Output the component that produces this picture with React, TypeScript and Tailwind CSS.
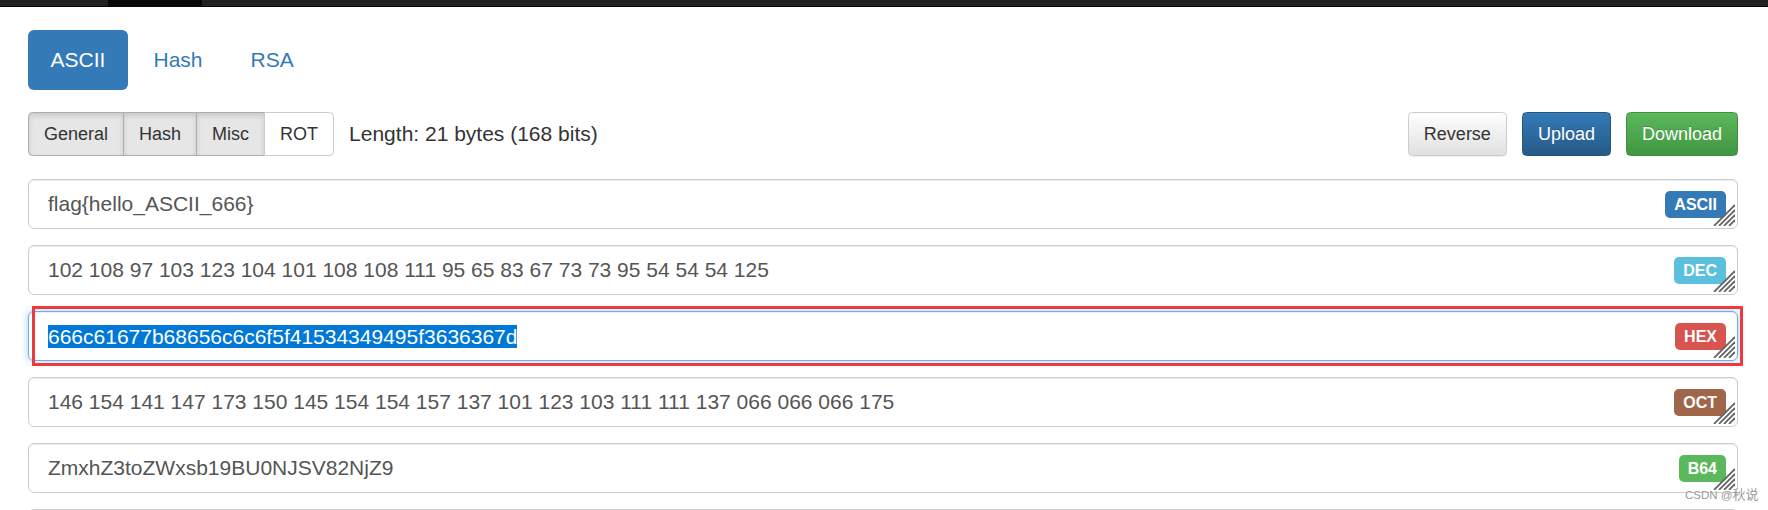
import React from 'react';

type Row = {
  value: string;
  label: string;
  badge: string;
  focused?: boolean;
};

const rows: Row[] = [
  { value: 'flag{hello_ASCII_666}', label: 'ASCII', badge: 'bg-[#337ab7]' },
  {
    value: '102 108 97 103 123 104 101 108 108 111 95 65 83 67 73 73 95 54 54 54 125',
    label: 'DEC',
    badge: 'bg-[#5bc0de]',
  },
  { value: '666c61677b68656c6c6f5f41534349495f3636367d', label: 'HEX', badge: 'bg-[#d9534f]', focused: true },
  {
    value: '146 154 141 147 173 150 145 154 154 157 137 101 123 103 111 111 137 066 066 066 175',
    label: 'OCT',
    badge: 'bg-[#a0664a]',
  },
  { value: 'ZmxhZ3toZWxsb19BU0NJSV82NjZ9', label: 'B64', badge: 'bg-[#5cb85c]' },
  { value: '', label: '', badge: '' },
];

function Grip() {
  // textarea resize handle
  return (
    <svg className="absolute right-[2px] bottom-[2px]" width="22" height="22" viewBox="0 0 22 22">
      {[6, 11, 16, 21].map((k) => (
        <line key={k} x1={22 - k} y1={22} x2={22} y2={22 - k} stroke="#666" strokeWidth="1.8" />
      ))}
    </svg>
  );
}

function ValueBox({ row }: { row: Row }) {
  return (
    <div className="relative">
      <div
        className={`relative h-[50px] rounded-[6px] border bg-white pl-[19px] pr-[80px] flex items-center text-[21px] text-[#555] whitespace-nowrap overflow-hidden ${
          row.focused
            ? 'border-[#66afe9] shadow-[inset_0_1px_1px_rgba(0,0,0,0.075),0_0_8px_rgba(102,175,233,0.6)]'
            : 'border-[#ccc] shadow-[inset_0_1px_1px_rgba(0,0,0,0.075)]'
        }`}
      >
        {row.focused ? (
          <span className="inline-block bg-[#0078d7] text-white leading-[23px]">{row.value}</span>
        ) : (
          <span>{row.value}</span>
        )}
        {row.label && (
          <span
            className={`absolute top-[11px] right-[11px] h-[27px] px-[9px] flex items-center rounded-[5px] text-white text-[16px] font-bold ${row.badge}`}
          >
            {row.label}
          </span>
        )}
        <Grip />
      </div>
      {row.focused && (
        <div className="absolute left-[4px] top-[-5px] right-[-5px] bottom-[-5px] border-[3px] border-[#ef3a3d] pointer-events-none" />
      )}
    </div>
  );
}

export default function App() {
  const groupBtns = [
    { name: 'General', active: true },
    { name: 'Hash', active: true },
    { name: 'Misc', active: true },
    { name: 'ROT', active: false },
  ];

  return (
    <div className="relative min-h-[510px] bg-white font-['Liberation_Sans',Arial,sans-serif] text-[#333]">
      <div className="h-[7px] bg-[#222] border-b border-[#080808] flex">
        <div className="w-[108px]" />
        <div className="w-[94px] bg-[#080808]" />
      </div>

      <div className="pl-[28px] pr-[30px]">
        <div className="mt-[23px] flex items-center text-[21px]">
          <div className="h-[60px] w-[100px] rounded-[6px] bg-[#337ab7] text-white flex items-center justify-center">
            ASCII
          </div>
          <div className="ml-[3px] h-[60px] px-[22.5px] flex items-center text-[#337ab7]">Hash</div>
          <div className="ml-[3px] h-[60px] px-[22.5px] flex items-center text-[#337ab7]">RSA</div>
        </div>

        <div className="mt-[22px] flex items-center">
          <div className="flex">
            {groupBtns.map((b, i) => (
              <div
                key={b.name}
                className={`h-[44px] px-[15px] flex items-center text-[18px] text-[#333] border ${
                  i > 0 ? '-ml-px' : ''
                } ${i === 0 ? 'rounded-l-[4.5px]' : ''} ${i === groupBtns.length - 1 ? 'rounded-r-[4.5px]' : ''} ${
                  b.active
                    ? 'bg-[#e6e6e6] border-[#adadad] shadow-[inset_0_3px_5px_rgba(0,0,0,0.125)]'
                    : 'bg-white border-[#ccc] z-10'
                }`}
              >
                {b.name}
              </div>
            ))}
          </div>
          <div className="ml-[15px] text-[21px] text-[#333]">Length: 21 bytes (168 bits)</div>

          <div className="ml-auto flex gap-[15px]">
            <button className="h-[44px] px-[15px] text-[18px] text-[#333] rounded-[4.5px] border border-[#ccc] bg-gradient-to-b from-white to-[#e0e0e0] shadow-[0_1px_1px_rgba(0,0,0,0.075)]">
              Reverse
            </button>
            <button className="h-[44px] px-[15px] text-[18px] text-white rounded-[4.5px] border border-[#245580] bg-gradient-to-b from-[#337ab7] to-[#265a88] [text-shadow:0_-1px_0_rgba(0,0,0,0.2)]">
              Upload
            </button>
            <button className="h-[44px] px-[15px] text-[18px] text-white rounded-[4.5px] border border-[#3e8f3e] bg-gradient-to-b from-[#5cb85c] to-[#419641] [text-shadow:0_-1px_0_rgba(0,0,0,0.2)]">
              Download
            </button>
          </div>
        </div>

        <div className="mt-[23px] flex flex-col gap-[16px]">
          {rows.map((r, i) => (
            <ValueBox key={i} row={r} />
          ))}
        </div>
      </div>

      <div className="absolute left-[1685px] top-[486px] whitespace-nowrap leading-[18px] text-[11.5px] text-[#9a9a9a] font-['Liberation_Sans','Noto_Sans_CJK_SC',sans-serif] [text-shadow:0_0_2px_#fff]">
        CSDN @<span className="text-[13px]">秋说</span>
      </div>
    </div>
  );
}
